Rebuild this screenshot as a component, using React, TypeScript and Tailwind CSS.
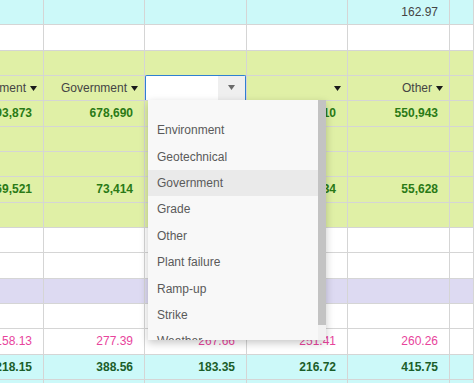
import React from "react";

type Kind = "plain" | "green" | "pink" | "cyanbold";
type Row = { bg: string; cells?: string[]; kind?: Kind; header?: boolean };

const BG: Record<string, string> = {
  cyan: "bg-[#ccf9f9]",
  white: "bg-white",
  green: "bg-[#e0f0a6]",
  lav: "bg-[#dddaf2]",
};

const TEXT: Record<Kind, string> = {
  plain: "text-[#444444]",
  green: "text-[#2a7a16] font-bold",
  pink: "text-[#e8449c]",
  cyanbold: "text-[#1b5e2a] font-bold",
};

const rows: Row[] = [
  { bg: "cyan", cells: ["", "", "", "", "162.97", ""], kind: "plain" },
  { bg: "white" },
  { bg: "green" },
  { bg: "green", header: true },
  { bg: "green", cells: ["493,873", "678,690", "512,004", "428,310", "550,943", ""], kind: "green" },
  { bg: "green" },
  { bg: "green" },
  { bg: "green", cells: ["69,521", "73,414", "91,207", "64,834", "55,628", ""], kind: "green" },
  { bg: "green" },
  { bg: "white" },
  { bg: "white" },
  { bg: "lav" },
  { bg: "white" },
  { bg: "white", cells: ["158.13", "277.39", "267.66", "251.41", "260.26", ""], kind: "pink" },
  { bg: "cyan", cells: ["218.15", "388.56", "183.35", "216.72", "415.75", ""], kind: "cyanbold" },
  { bg: "cyan" },
];

const headers = ["Environment", "Government", null, "", "Other", ""];

function Tri() {
  return (
    <svg width="7" height="5" viewBox="0 0 7 5" className="shrink-0">
      <polygon points="0,0 7,0 3.5,5" fill="#1a1a1a" />
    </svg>
  );
}

const options = [
  "",
  "Environment",
  "Geotechnical",
  "Government",
  "Grade",
  "Other",
  "Plant failure",
  "Ramp-up",
  "Strike",
  "Weather",
];

export default function App() {
  return (
    <div
      className="relative w-[474px] h-[383px] overflow-hidden bg-white text-[12px]"
      style={{ fontFamily: '"Liberation Sans", Arial, sans-serif' }}
    >
      <div className="grid grid-cols-[44px_101px_102px_101px_102px_1fr] auto-rows-[25.33px]">
        {rows.map((r, ri) =>
          [0, 1, 2, 3, 4, 5].map((ci) => {
            const base = `${BG[r.bg]} border-r border-b border-[#d5d5d5] flex items-center justify-end overflow-hidden whitespace-nowrap`;
            if (r.header) {
              if (ci === 2) {
                return (
                  <div key={`${ri}-${ci}`} className={`${base} relative overflow-visible`}>
                    <div className="absolute left-0 top-[-1px] w-[101px] h-[25px] bg-white border border-b-0 border-[#2f80d2] rounded-t-[2px] flex justify-end">
                      <div className="w-[27px] h-full bg-[#efefef] flex items-center justify-center">
                        <svg width="7" height="5" viewBox="0 0 7 5">
                          <polygon points="0,0 7,0 3.5,5" fill="#6a6a6a" />
                        </svg>
                      </div>
                    </div>
                  </div>
                );
              }
              const h = headers[ci];
              return (
                <div key={`${ri}-${ci}`} className={`${base} pr-[6px] gap-[4px] text-[#444444]`}>
                  {h !== "" && h !== null && ci !== 5 && <span>{h}</span>}
                  {ci !== 5 && <Tri />}
                </div>
              );
            }
            const t = r.cells ? r.cells[ci] : "";
            return (
              <div key={`${ri}-${ci}`} className={`${base} pr-[11px] ${r.kind ? TEXT[r.kind] : ""}`}>
                {t}
              </div>
            );
          })
        )}
      </div>

      <div className="absolute left-[148px] top-[100px] w-[178px] h-[240px] bg-[#f8f8f8] shadow-[0_3px_8px_rgba(0,0,0,0.22)] flex overflow-hidden">
        <div className="flex-1 flex flex-col text-[#5a5a5a]">
          {options.map((o, i) => (
            <div
              key={i}
              className={`${i === 0 ? "h-[17px]" : "h-[26.4px]"} shrink-0 px-[9px] flex items-center ${o === "Government" ? "bg-[#eaeaea]" : ""}`}
            >
              {o}
            </div>
          ))}
        </div>
        <div className="w-[8px] h-full bg-[#f1f1f1] flex flex-col">
          <div className="h-[225px] bg-[#c3c3c3]" />
        </div>
      </div>
    </div>
  );
}
